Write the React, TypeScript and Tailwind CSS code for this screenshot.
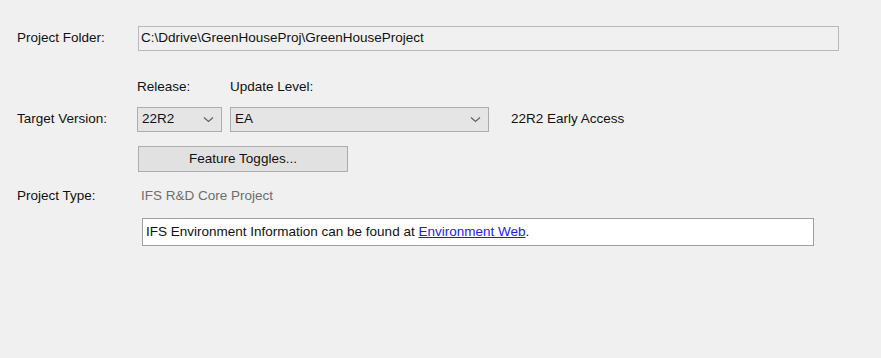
const font = { fontFamily: '"Liberation Sans", Arial, sans-serif' };

function Chevron() {
  return (
    <svg width="11" height="7" viewBox="0 0 11 7" className="shrink-0">
      <path d="M1 1.5 L5.5 5.5 L10 1.5" fill="none" stroke="#606060" strokeWidth="1.2" />
    </svg>
  );
}

function Combo({ value, className }: { value: string; className: string }) {
  return (
    <div
      className={`flex h-[25px] items-center justify-between border border-[#adadad] bg-[#e5e5e5] pl-[4px] pr-[7px] ${className}`}
    >
      <span>{value}</span>
      <Chevron />
    </div>
  );
}

export default function App() {
  return (
    <div
      className="h-[358px] w-[881px] bg-[#f0f0f0] pl-[17px] pt-[26px] text-[13.5px] text-[#111111]"
      style={font}
    >
      <div className="flex items-center">
        <div className="w-[121px]">Project Folder:</div>
        <div className="flex h-[25px] w-[701px] items-center border border-[#b9b9b9] bg-[#f0f0f0] pl-[2px]">
          C:\Ddrive\GreenHouseProj\GreenHouseProject
        </div>
      </div>

      <div className="mt-[28px] flex h-[16px] items-center">
        <div className="w-[120px]" />
        <div className="w-[93px]">Release:</div>
        <div>Update Level:</div>
      </div>

      <div className="mt-[12px] flex items-center">
        <div className="w-[120px]">Target Version:</div>
        <Combo value="22R2" className="w-[85px]" />
        <Combo value="EA" className="ml-[8px] w-[259px]" />
        <div className="ml-[22px]">22R2 Early Access</div>
      </div>

      <div className="mt-[14px] flex">
        <div className="w-[121px]" />
        <button className="h-[26px] w-[210px] border border-[#adadad] bg-[#e1e1e1] text-center">
          Feature Toggles...
        </button>
      </div>

      <div className="mt-[16px] flex h-[16px] items-center">
        <div className="w-[124px]">Project Type:</div>
        <div className="text-[#6d6d6d]">IFS R&amp;D Core Project</div>
      </div>

      <div className="mt-[14px] flex">
        <div className="w-[125px]" />
        <div className="flex h-[28px] w-[672px] items-center border border-[#a0a0a0] bg-white pl-[3px]">
          <span>
            IFS Environment Information can be found at{" "}
            <a href="#" className="text-[#1a1aff] underline">
              Environment Web
            </a>
            .
          </span>
        </div>
      </div>
    </div>
  );
}
